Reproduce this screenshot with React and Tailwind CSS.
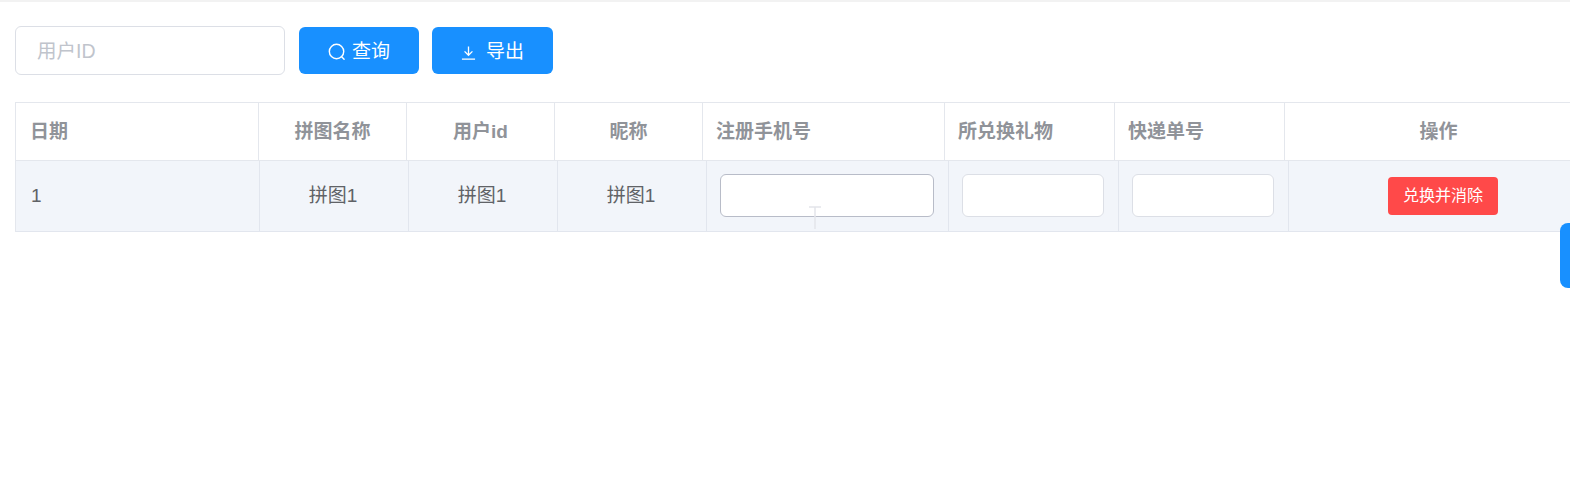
const headers = [
  { label: '日期', w: 'w-[243px]', align: 'justify-start pl-[14px]' },
  { label: '拼图名称', w: 'w-[148px]', align: 'justify-center' },
  { label: '用户id', w: 'w-[148px]', align: 'justify-center' },
  { label: '昵称', w: 'w-[148px]', align: 'justify-center' },
  { label: '注册手机号', w: 'w-[242px]', align: 'justify-start pl-[13px]' },
  { label: '所兑换礼物', w: 'w-[170px]', align: 'justify-start pl-[13px]' },
  { label: '快递单号', w: 'w-[170px]', align: 'justify-start pl-[13px]' },
  { label: '操作', w: 'w-[308px]', align: 'justify-center' },
];

function SearchIcon() {
  return (
    <svg width="18" height="18" viewBox="0 0 19 19" fill="none" stroke="currentColor" strokeWidth="1.5" strokeLinecap="round">
      <circle cx="9" cy="9" r="7.6" />
      <path d="M14.4 14.4L17 17.2" />
    </svg>
  );
}

function DownloadIcon() {
  return (
    <svg width="15" height="15" viewBox="0 0 16 16" fill="none" stroke="currentColor" strokeWidth="1.4">
      <path d="M8 1.5v9M3.8 6.8L8 11l4.2-4.2M1 15h14" />
    </svg>
  );
}

function TextCell({ className, children }) {
  return (
    <div className={`flex h-full shrink-0 items-center border-r border-[#e2e6ee] text-[19px] text-[#606266] ${className}`}>
      {children}
    </div>
  );
}

function CellInput({ cellW, inputW, pl, border }) {
  return (
    <div className={`flex h-full shrink-0 items-center border-r border-[#e2e6ee] pb-[2px] ${cellW} ${pl}`}>
      <input className={`h-[43px] rounded-[6px] border bg-white outline-none ${inputW} ${border}`} />
    </div>
  );
}

export default function App() {
  return (
    <div className="relative h-[491px] w-[1570px] overflow-hidden border-t-2 border-[#f2f2f2] bg-white font-['Liberation_Sans','Noto_Sans_CJK_SC',sans-serif]">
      {/* Toolbar */}
      <div className="flex items-center pl-[15px] pt-[24px]">
        <input
          placeholder="用户ID"
          className="h-[49px] w-[270px] rounded-[6px] border border-[#dcdfe6] bg-white px-[21px] pt-[2px] text-[19.5px] text-[#606266] outline-none placeholder:text-[#c0c4cc]"
        />
        <button className="ml-[14px] flex h-[47px] w-[120px] items-center justify-center gap-[6px] rounded-[6px] bg-[#1890ff] pt-[3px] text-[19px] text-white">
          <SearchIcon />
          <span>查询</span>
        </button>
        <button className="ml-[13px] flex h-[47px] w-[121px] items-center justify-center gap-[10px] rounded-[6px] bg-[#1890ff] pt-[3px] text-[19px] text-white">
          <DownloadIcon />
          <span>导出</span>
        </button>
      </div>

      {/* Table */}
      <div className="ml-[15px] mt-[27px] w-[1600px] border-l border-[#e4e7ed]">
        <div className="flex h-[59px] border-y border-[#e4e7ed]">
          {headers.map((h) => (
            <div
              key={h.label}
              className={`flex h-full shrink-0 items-center border-r border-[#e4e7ed] pt-[2px] text-[19px] font-bold text-[#909399] ${h.w} ${h.align}`}
            >
              {h.label}
            </div>
          ))}
        </div>
        <div className="flex h-[71px] border-b border-[#e2e6ee] bg-[#f2f5fa]">
          <TextCell className="w-[244px] pl-[15px]">1</TextCell>
          <TextCell className="w-[149px] justify-center pr-[2px]">拼图1</TextCell>
          <TextCell className="w-[149px] justify-center pr-[2px]">拼图1</TextCell>
          <TextCell className="w-[149px] justify-center pr-[2px]">拼图1</TextCell>
          <CellInput cellW="w-[242px]" inputW="w-[214px]" pl="pl-[13px]" border="border-[#b8bcc8]" />
          <CellInput cellW="w-[170px]" inputW="w-[142px]" pl="pl-[13px]" border="border-[#dcdfe6]" />
          <CellInput cellW="w-[170px]" inputW="w-[142px]" pl="pl-[13px]" border="border-[#dcdfe6]" />
          <div className="flex h-full w-[308px] shrink-0 items-center justify-center">
            <button className="h-[38px] w-[110px] rounded-[4px] bg-[#ff4949] text-[16px] text-white">兑换并消除</button>
          </div>
        </div>
      </div>

      {/* Text cursor over the first input */}
      <svg className="absolute left-[808px] top-[204px]" width="14" height="24" viewBox="0 0 14 24" fill="none" stroke="#e3e5ea" strokeWidth="1.5">
        <path d="M1 1h12M7 1v22" />
      </svg>

      {/* Side tab */}
      <div className="absolute right-0 top-[221px] h-[65px] w-[10px] rounded-l-[8px] bg-[#1890ff]" />
    </div>
  );
}
